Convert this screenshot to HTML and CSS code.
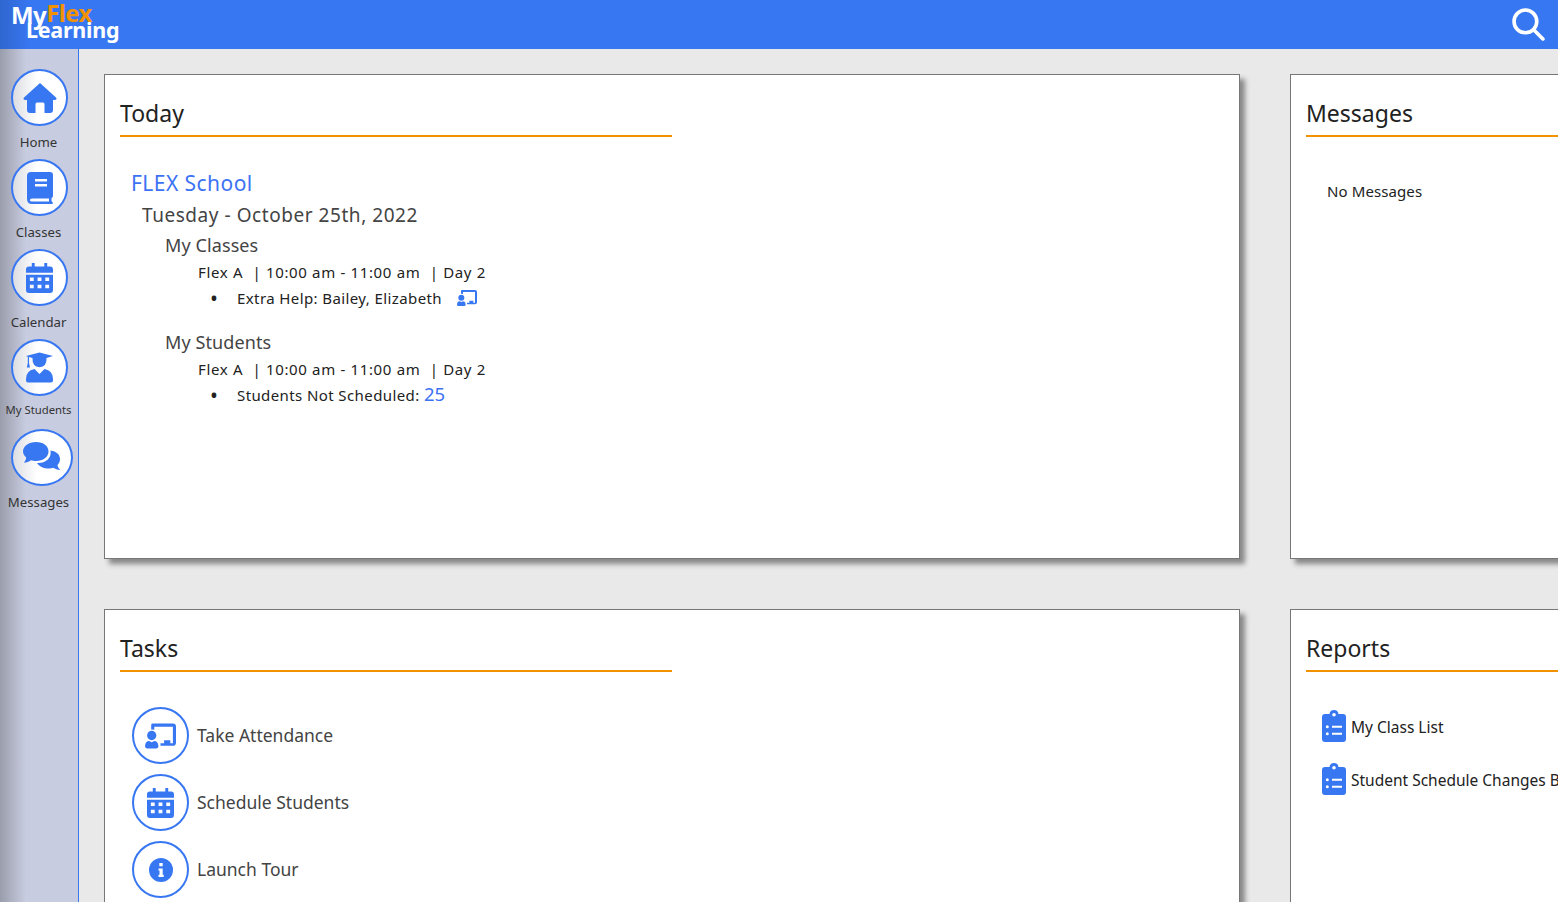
FILE: index.html
```html
<!DOCTYPE html>
<html lang="en">
<head>
  <meta charset="UTF-8">
  <meta name="viewport" content="width=device-width, initial-scale=1.0">
  <title>MyFlex Learning</title>
  <link rel="stylesheet" href="styles.css">
</head>
<body>
  <svg class="icon-defs" width="0" height="0" aria-hidden="true">
    <symbol id="i-home" viewBox="0 0 34 30">
      <path d="M17 0 L33 14.500 Q34.500 16.500 32 17 L30 17 L30 27 Q30 30 27 30 L21.500 30 L21.500 21 Q21.500 19.500 20 19.500 L14 19.500 Q12.500 19.500 12.500 21 L12.500 30 L7 30 Q4 30 4 27 L4 17 L2 17 Q-.5 16.500 1 14.500 Z"/>
    </symbol>
    <symbol id="i-book" viewBox="0 0 26 32">
      <path fill-rule="evenodd" d="M4 0 H23 Q26 0 26 3 V24 Q26 25.500 24.500 26 V29 L26 31 Q26 32 25 32 H5 Q0 32 0 27 V4 Q0 0 4 0 Z M8 7 V9.500 H20 V7 Z M8 12 V14.500 H20 V12 Z M5 26.500 Q2.800 26.800 2.800 28.200 Q2.800 29.500 5 29.600 H22 V26.500 Z"/>
    </symbol>
    <symbol id="i-calendar" viewBox="0 0 28 31">
      <path fill-rule="evenodd" d="M6 0 H9 V3.500 H19 V0 H22 V3.500 H25 Q28 3.500 28 6.500 V10 H0 V6.500 Q0 3.500 3 3.500 H6 Z M0 12 H28 V28 Q28 31 25 31 H3 Q0 31 0 28 Z M4 15 V18.500 H8 V15 Z M12 15 V18.500 H16 V15 Z M20 15 V18.500 H24 V15 Z M4 22.500 V26 H8 V22.500 Z M12 22.500 V26 H16 V22.500 Z M20 22.500 V26 H24 V22.500 Z"/>
    </symbol>
    <symbol id="i-student" viewBox="0 0 27 30">
      <path d="M13.500 0 L27 3.500 L20.500 5.500 Q21 14 13.500 14.800 Q6 14 6.500 5.500 L3 4.500 V10.500 L4 15 H.8 L1.800 10.500 V4.200 L0 3.500 Z"/>
      <path d="M8.500 16.500 L13.500 21.500 L18.500 16.500 Q27 18 27 26.500 V28 Q27 30 25 30 H2 Q0 30 0 28 V26.500 Q0 18 8.500 16.500 Z"/>
    </symbol>
    <symbol id="i-comments" viewBox="0 0 38 32">
      <path d="M13 0 C20.500 0 25.500 4 25.500 9.500 C25.500 15 20 19 13 19 C11 19 9.500 18.700 8 18.200 C6 19.700 3.500 20.500 .8 20.500 C2.500 19 3 17 3.200 15.500 C1 13.500 0 11.500 0 9.500 C0 4 6 0 13 0 Z"/>
      <path d="M27.500 8.500 C33.500 9.500 37 12.500 37 17 C37 19.500 36 21.500 34.500 23 C34.600 24.500 35.500 26.500 37.500 28 C34.500 28 32 27 30.300 25.800 C28.800 26.300 27.500 26.500 26 26.500 C20.500 26.500 16 24.500 14 21 C22 21.500 29 16.500 27.500 8.500 Z"/>
    </symbol>
    <symbol id="i-teach" viewBox="0 0 30 24">
      <circle cx="6.500" cy="11.500" r="4.500"/>
      <path d="M0 22 C0 18.500 2 16.800 4 16.800 L6.500 18 L9 16.800 C11 16.800 13 18.500 13 22 Q13 24 11 24 H2 Q0 24 0 22 Z"/>
      <path d="M7 0 H27 Q30 0 30 3 V18.500 Q30 21.500 27 21.500 H15 V19 H18.500 V16 H24.500 V19 H27 V3 H9 V6 Q7.500 5.600 6 5.800 V1.500 Q6 0 7 0 Z"/>
    </symbol>
    <symbol id="i-info" viewBox="0 0 24 24">
      <path fill-rule="evenodd" d="M12 0 A12 12 0 1 1 12 24 A12 12 0 1 1 12 0 Z M10.300 5 V8.200 H13.700 V5 Z M9.500 10.500 V12.500 H10.500 V16.800 H9.500 V19 H14.700 V16.800 H13.700 V10.500 Z"/>
    </symbol>
    <symbol id="i-report" viewBox="0 0 24 32">
      <path fill-rule="evenodd" d="M12 0 Q16 0 16.500 4 H21 Q24 4 24 7 V29 Q24 32 21 32 H3 Q0 32 0 29 V7 Q0 4 3 4 H7.500 Q8 0 12 0 Z M12 3 A1.800 1.800 0 1 0 12 6.600 A1.800 1.800 0 1 0 12 3 Z M5.300 15.200 A1.500 1.500 0 1 0 5.300 18.200 A1.500 1.500 0 1 0 5.300 15.200 Z M5.300 22.200 A1.500 1.500 0 1 0 5.300 25.200 A1.500 1.500 0 1 0 5.300 22.200 Z M10 15.700 V17.700 H20 V15.700 Z M10 22.700 V24.700 H20 V22.700 Z"/>
    </symbol>
  </svg>

  <header class="topbar">
    <div class="logo">
      <div class="logo-top">My<span class="logo-flex">Flex</span></div>
      <div class="logo-bottom">Learning</div>
    </div>
    <svg class="search-icon" viewBox="0 0 32 32" aria-label="Search">
      <circle cx="13" cy="13" r="11" />
      <path d="M21 21 L30 30" />
    </svg>
  </header>

  <div class="layout">
    <nav class="sidebar">
      <a class="nav-item">
        <span class="nav-circle"><svg class="nav-home"><use href="#i-home"/></svg></span>
        <span class="nav-label">Home</span>
      </a>
      <a class="nav-item">
        <span class="nav-circle"><svg class="nav-book"><use href="#i-book"/></svg></span>
        <span class="nav-label">Classes</span>
      </a>
      <a class="nav-item">
        <span class="nav-circle"><svg class="nav-cal"><use href="#i-calendar"/></svg></span>
        <span class="nav-label">Calendar</span>
      </a>
      <a class="nav-item">
        <span class="nav-circle"><svg class="nav-student"><use href="#i-student"/></svg></span>
        <span class="nav-label nav-label-small">My Students</span>
      </a>
      <a class="nav-item">
        <span class="nav-circle nav-circle-wide"><svg class="nav-msg"><use href="#i-comments"/></svg></span>
        <span class="nav-label">Messages</span>
      </a>
    </nav>

    <main class="content">
      <section class="panel">
        <h2 class="panel-title">Today</h2>
        <div class="school">FLEX School</div>
        <div class="date">Tuesday - October 25th, 2022</div>

        <div class="group-title">My Classes</div>
        <div class="period">Flex A &nbsp;| 10:00 am - 11:00 am &nbsp;| Day 2</div>
        <ul class="period-list">
          <li>Extra Help: Bailey, Elizabeth <svg class="teach-small"><use href="#i-teach"/></svg></li>
        </ul>

        <div class="group-title group-gap">My Students</div>
        <div class="period">Flex A &nbsp;| 10:00 am - 11:00 am &nbsp;| Day 2</div>
        <ul class="period-list">
          <li>Students Not Scheduled: <span class="count">25</span></li>
        </ul>
      </section>

      <section class="panel">
        <h2 class="panel-title">Messages</h2>
        <p class="no-messages">No Messages</p>
      </section>

      <section class="panel">
        <h2 class="panel-title">Tasks</h2>
        <div class="tasks">
          <a class="task">
            <span class="task-circle"><svg class="task-teach"><use href="#i-teach"/></svg></span>
            <span class="task-name">Take Attendance</span>
          </a>
          <a class="task">
            <span class="task-circle"><svg class="task-cal"><use href="#i-calendar"/></svg></span>
            <span class="task-name">Schedule Students</span>
          </a>
          <a class="task">
            <span class="task-circle"><svg class="task-info"><use href="#i-info"/></svg></span>
            <span class="task-name">Launch Tour</span>
          </a>
        </div>
      </section>

      <section class="panel">
        <h2 class="panel-title">Reports</h2>
        <div class="reports">
          <a class="report"><svg class="report-icon"><use href="#i-report"/></svg><span class="report-name">My Class List</span></a>
          <a class="report"><svg class="report-icon"><use href="#i-report"/></svg><span class="report-name">Student Schedule Changes By Date</span></a>
        </div>
      </section>
    </main>
  </div>
</body>
</html>
```

FILE: styles.css
```css
html, body {
  height: 100%;
}
body {
  margin: 0;
  overflow: hidden;
  font-family: "Noto Sans", "Open Sans", sans-serif;
  color: #222;
  background: #e9e9e9;
}
.icon-defs {
  position: absolute;
}
svg {
  fill: #3877f2;
  display: block;
}

/* top bar */
.topbar {
  height: 49px;
  background: linear-gradient(to right, #2f66cf, #3877f2 30px);
  display: flex;
  justify-content: space-between;
  align-items: center;
  padding: 0 13px 0 11px;
}
.logo {
  color: #fff;
  font-weight: 700;
  width: 110px;
  height: 49px;
}
.logo-top {
  font-size: 24px;
  line-height: 24px;
  padding-top: 1px;
  letter-spacing: -0.6px;
}
.logo-flex {
  color: #f39200;
  vertical-align: 2px;
}
.logo-bottom {
  font-size: 21.5px;
  line-height: 20px;
  margin-left: 15px;
  margin-top: -7px;
  letter-spacing: -0.25px;
}
.search-icon {
  width: 33px;
  height: 33px;
  fill: none;
  stroke: #fff;
  stroke-width: 3.5;
  stroke-linecap: round;
}

/* sidebar */
.layout {
  display: flex;
  height: 853px;
}
.sidebar {
  width: 78px;
  flex: none;
  border-right: 1px solid #3877f2;
  background: linear-gradient(to right, #9a9dab, #c8cce0 26px);
  padding-top: 20px;
}
.nav-item {
  display: block;
  height: 90px;
}
.nav-circle {
  display: flex;
  align-items: center;
  justify-content: center;
  box-sizing: border-box;
  width: 57px;
  height: 57px;
  margin-left: 11px;
  border: 2px solid #3877f2;
  border-radius: 50%;
  background: linear-gradient(to right, #dcdde2, #fff 24px);
}
.nav-circle-wide {
  width: 62px;
}
.nav-label {
  display: block;
  width: 77px;
  text-align: center;
  font-size: 13.2px;
  line-height: 18px;
  margin-top: 7px;
  color: #333;
}
.nav-label-small {
  font-size: 11.3px;
  margin-top: 5px;
}
.nav-home {
  width: 34px;
  height: 30px;
}
.nav-book {
  width: 26px;
  height: 32px;
}
.nav-cal {
  width: 27px;
  height: 30px;
}
.nav-student {
  width: 27px;
  height: 31px;
}
.nav-msg {
  width: 38px;
  height: 32px;
}

/* panels */
.content {
  flex: none;
  display: grid;
  grid-template-columns: 1136px 1136px;
  grid-template-rows: 485px 485px;
  gap: 50px;
  padding: 25px;
}
.panel {
  box-sizing: border-box;
  background: #fff;
  border: 1px solid #777;
  box-shadow: 5px 5px 5px #888;
  padding: 15px;
}
.panel-title {
  width: 552px;
  margin: 0;
  height: 47px;
  box-sizing: border-box;
  border-bottom: 2px solid #f39200;
  font-size: 23px;
  font-weight: 400;
  line-height: 46px;
  color: #222;
}
.school {
  margin: 32px 0 0 11px;
  font-size: 21px;
  line-height: 28px;
  letter-spacing: 0.45px;
  color: #3c72f4;
}
.date {
  margin: 5px 0 0 22px;
  font-size: 19px;
  line-height: 26px;
  letter-spacing: 0.55px;
  color: #444;
}
.group-title {
  margin: 5px 0 0 45px;
  font-size: 18px;
  line-height: 24px;
  letter-spacing: 0.1px;
  color: #444;
}
.group-gap {
  margin-top: 21px;
}
.period {
  margin: 4px 0 0 78px;
  font-size: 15px;
  line-height: 22px;
  letter-spacing: 0.62px;
  word-spacing: 0.15px;
}
.period-list {
  list-style: none;
  margin: 4px 0 0 90px;
  padding: 0;
  font-size: 15px;
  line-height: 22px;
  letter-spacing: 0.4px;
}
.period-list li::before {
  content: "\2022";
  display: inline-block;
  width: 27px;
  font-size: 21px;
  line-height: 0;
  vertical-align: -2px;
}
.teach-small {
  display: inline-block;
  width: 20px;
  height: 16px;
  margin-left: 11px;
  vertical-align: -2px;
}
.count {
  color: #3c72f4;
  font-size: 18.5px;
  line-height: 0;
  letter-spacing: 0;
}
.no-messages {
  margin: 44px 0 0 21px;
  font-size: 15px;
  line-height: 20px;
  letter-spacing: 0.1px;
}

/* tasks */
.tasks {
  margin: 35px 0 0 12px;
  display: flex;
  flex-direction: column;
  gap: 10px;
}
.task {
  display: flex;
  align-items: center;
  gap: 8px;
  font-size: 17.5px;
  color: #444;
}
.task-name {
  padding-bottom: 2px;
}
.task-circle {
  display: flex;
  align-items: center;
  justify-content: center;
  box-sizing: border-box;
  width: 57px;
  height: 57px;
  border: 2px solid #3877f2;
  border-radius: 50%;
}
.task-teach {
  width: 31px;
  height: 26px;
}
.task-cal {
  width: 27px;
  height: 30px;
}
.task-info {
  width: 24px;
  height: 24px;
}

/* reports */
.reports {
  margin: 38px 0 0 16px;
  display: flex;
  flex-direction: column;
  gap: 21px;
}
.report {
  display: flex;
  align-items: center;
  gap: 5px;
  font-size: 15.5px;
  white-space: nowrap;
}
.report-name {
  padding-top: 1px;
}
.report-icon {
  width: 24px;
  height: 32px;
}
```
